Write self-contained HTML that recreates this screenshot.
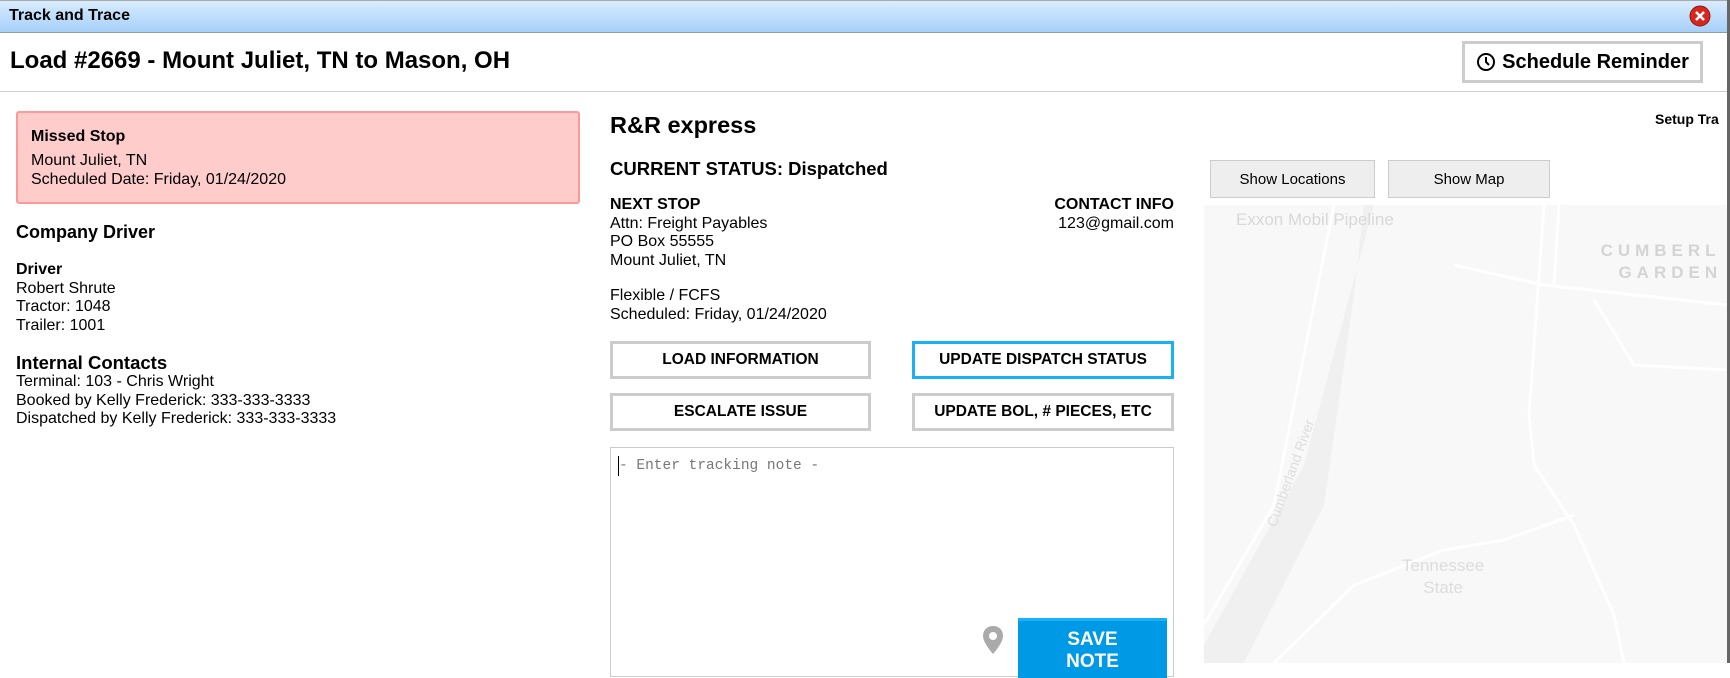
<!DOCTYPE html>
<html><head><style>
*{margin:0;padding:0;box-sizing:border-box}
body{width:1730px;height:663px;overflow:hidden;background:#fff;font-family:"Liberation Sans",Arial,sans-serif;color:#000;position:relative}
.a{position:absolute;white-space:nowrap}
.tb{left:0;top:0;width:1727px;height:33px;background:linear-gradient(#d9ecfd,#a6d0fa);border-bottom:1px solid #999;border-top:1px solid #aaa}
.btn{position:absolute;border:3px solid #ccc;background:#fff;font-weight:bold;font-size:15.5px;display:flex;align-items:center;justify-content:center}
.t{font-size:16px;line-height:18.5px}
</style></head><body>
<div class="a tb"></div>
<div class="a" style="left:9px;top:7px;font-size:16px;font-weight:bold">Track and Trace</div>
<svg class="a" style="left:1689px;top:4px" width="22" height="24" viewBox="0 0 22 24"><circle cx="11" cy="12" r="10" fill="#d9261c" stroke="#8b1a12"/><path d="M7 8l8 8M15 8l-8 8" stroke="#fff" stroke-width="2.6"/></svg>
<div class="a" style="left:1727px;top:0;width:3px;height:663px;background:#666"></div>
<div class="a" style="left:0;top:91px;width:1727px;height:1px;background:#ccc"></div>
<div class="a" style="left:10px;top:47px;font-size:24px;font-weight:bold">Load #2669 - Mount Juliet, TN to Mason, OH</div>
<div class="btn" style="left:1462px;top:41px;width:241px;height:42px;font-size:20px"><svg width="20" height="20" viewBox="0 0 20 20" style="margin-right:6px"><circle cx="10" cy="10" r="8" fill="none" stroke="#000" stroke-width="2"/><path d="M10 5v5l3 3" fill="none" stroke="#000" stroke-width="2"/></svg>Schedule Reminder</div>

<div class="a" style="left:16px;top:111px;width:564px;height:93px;background:#fcc;border:2px solid #f99;border-radius:3px"></div>
<div class="a t" style="left:31px;top:128px;font-weight:bold">Missed Stop</div>
<div class="a t" style="left:31px;top:152px">Mount Juliet, TN<br>Scheduled Date: Friday, 01/24/2020</div>
<div class="a" style="left:16px;top:222px;font-size:18px;font-weight:bold">Company Driver</div>
<div class="a t" style="left:16px;top:261px"><b>Driver</b><br>Robert Shrute<br>Tractor: 1048<br>Trailer: 1001</div>
<div class="a" style="left:16px;top:352px;font-size:18.5px;font-weight:bold">Internal Contacts</div>
<div class="a t" style="left:16px;top:373px">Terminal: 103 - Chris Wright<br>Booked by Kelly Frederick: 333-333-3333<br>Dispatched by Kelly Frederick: 333-333-3333</div>

<div class="a" style="left:610px;top:112px;font-size:23.5px;font-weight:bold">R&amp;R express</div>
<div class="a" style="left:610px;top:158px;font-size:18.5px;font-weight:bold">CURRENT STATUS: Dispatched</div>
<div class="a t" style="left:610px;top:196px"><b>NEXT STOP</b><br>Attn: Freight Payables<br>PO Box 55555<br>Mount Juliet, TN</div>
<div class="a t" style="left:610px;top:287px">Flexible / FCFS<br>Scheduled: Friday, 01/24/2020</div>
<div class="a t" style="left:1000px;width:174px;top:196px;text-align:right"><b>CONTACT INFO</b><br>123@gmail.com</div>
<div class="btn" style="left:610px;top:341px;width:261px;height:38px">LOAD INFORMATION</div>
<div class="btn" style="left:912px;top:341px;width:262px;height:38px;border-color:#1ab0f5">UPDATE DISPATCH STATUS</div>
<div class="btn" style="left:610px;top:393px;width:261px;height:38px">ESCALATE ISSUE</div>
<div class="btn" style="left:912px;top:393px;width:262px;height:38px">UPDATE BOL, # PIECES, ETC</div>
<div class="a" style="left:610px;top:447px;width:564px;height:230px;border:1px solid #ccc"></div>
<div class="a" style="left:618px;top:456px;width:1px;height:20px;background:#000"></div>
<div class="a" style="left:619px;top:458px;font-family:'Liberation Mono',monospace;font-size:14.5px;color:#777">- Enter tracking note -</div>
<svg class="a" style="left:982px;top:625px" width="22" height="30" viewBox="0 0 22 30"><path d="M11 1C5 1 1 5 1 11c0 7 10 18 10 18s10-11 10-18C21 5 17 1 11 1z" fill="#aaa"/><circle cx="11" cy="11" r="4" fill="#fff"/></svg>
<div class="a" style="left:1018px;top:618px;width:149px;height:60px;background:#0099e5;border-top:3px solid #1ab0f5;color:#fff;font-weight:bold;font-size:19px;text-align:center;line-height:22px;padding-top:8px">SAVE<br>NOTE</div>

<div class="a" style="left:1655px;top:111px;font-size:14px;font-weight:bold">Setup Tra</div>
<div class="a" style="left:1210px;top:160px;width:165px;height:38px;background:#eee;border:1px solid #ccc;font-size:15px;display:flex;align-items:center;justify-content:center">Show Locations</div>
<div class="a" style="left:1388px;top:160px;width:162px;height:38px;background:#eee;border:1px solid #ccc;font-size:15px;display:flex;align-items:center;justify-content:center">Show Map</div>
<div class="a" style="left:1204px;top:205px;width:523px;height:458px;background:#f8f8f8;overflow:hidden">
<svg width="523" height="458" style="position:absolute;left:0;top:0"><g fill="none" stroke="#fff" stroke-width="3"><path d="M130 0L110 100 70 300 0 420"/><path d="M340 0L325 210 330 260 370 320 410 410 420 458"/><path d="M250 60L340 80 523 100"/><path d="M70 458L150 380 240 345 300 335 370 310"/><path d="M355 0L350 80"/><path d="M390 95L430 160 523 165"/></g><path d="M170 0L100 260 0 440 0 458 40 458 120 300 150 90 160 0z" fill="#f0f0f0"/></svg>
<div class="a" style="left:32px;top:5px;font-size:17px;color:#d8d8d8">Exxon Mobil Pipeline</div>
<div class="a" style="left:395px;top:35px;font-size:17px;color:#d4d4d4;font-weight:bold;letter-spacing:5px;line-height:22px;text-align:center">CUMBERL<br>&nbsp;&nbsp;GARDEN</div>
<div class="a" style="left:198px;top:350px;font-size:17px;color:#ddd;text-align:center;line-height:22px">Tennessee<br>State</div>
<div class="a" style="left:30px;top:260px;font-size:14px;color:#ddd;transform:rotate(-70deg)">Cumberland River</div>
</div>
</body></html>
